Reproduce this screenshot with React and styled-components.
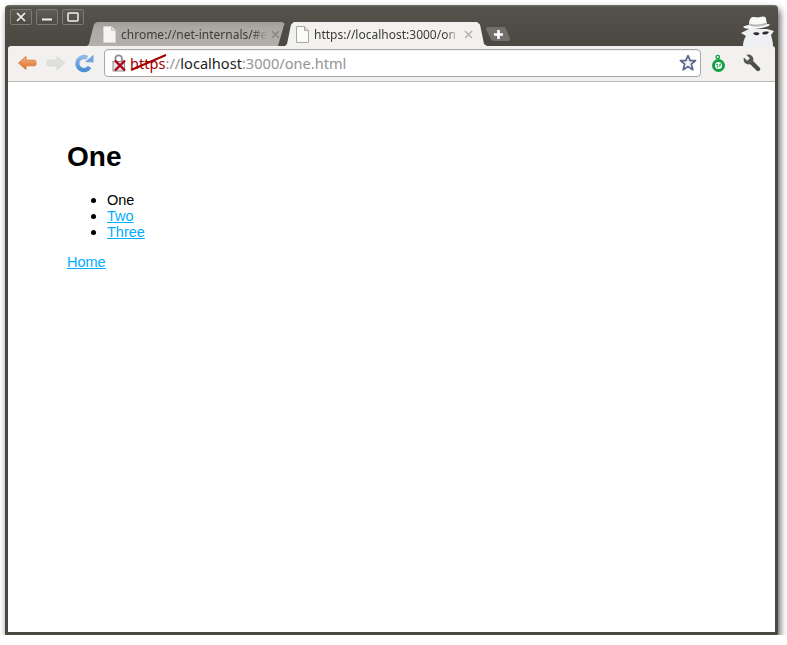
import React from 'react'
import styled, { createGlobalStyle } from 'styled-components'

const GlobalStyle = createGlobalStyle`
html, body {
  margin: 0;
  padding: 0;
  background: #fff;
}
`

const Window = styled.div`
  box-sizing: border-box;
  width: 773px;
  height: 630px;
  margin: 5px 0 0 5px;
  padding: 0 3px 3px 3px;
  display: flex;
  flex-direction: column;
  background: linear-gradient(#77746e 0, #55524c 2px, #4b4842 41px);
  border-radius: 4px 4px 1px 1px;
  box-shadow: 2px 4px 7px rgba(0, 0, 0, 0.65);
`

const TitleBar = styled.div`
  height: 41px;
  flex-shrink: 0;
  display: flex;
  padding-left: 2px;
`

const WindowControls = styled.div`
  display: flex;
  gap: 4px;
  padding-top: 4px;
  margin-right: 3px;
`

const ControlButton = styled.div`
  box-sizing: border-box;
  width: 22px;
  height: 16px;
  display: flex;
  align-items: center;
  justify-content: center;
  border: 1px solid #7d7a73;
  border-radius: 2px;
  background: linear-gradient(#5f5c56, #4e4b45);
`

const TabStrip = styled.div`
  display: flex;
  align-items: flex-end;
  flex: 1;
`

const Tab = styled.div`
  box-sizing: border-box;
  width: ${(p) => (p.$active ? 202 : 198)}px;
  height: 24px;
  padding: ${(p) => (p.$active ? '0 14px 0 10px' : '0 5px 0 15px')};
  display: flex;
  align-items: center;
  gap: 4px;
  font-family: 'Noto Sans', sans-serif;
  font-size: 12px;
  color: #3c3b37;
  background: ${(p) =>
    p.$active ? '#f2f1f0' : 'linear-gradient(#a09e98, #acaaa4 30%, #b2b0aa)'};
  clip-path: ${(p) =>
    p.$active
      ? 'polygon(0 100%, 2px 92%, 6px 10%, 9px 0, 192px 0, 195px 10%, 199px 92%, 100% 100%)'
      : 'polygon(0 100%, 2px 92%, 7px 8%, 10px 0, 195px 0, 198px 2px, 197px 12%, 191px 100%)'};
`

const TabTitle = styled.span`
  flex: 1;
  overflow: hidden;
  white-space: nowrap;
  mask-image: linear-gradient(to right, #000 90%, transparent 100%);
`

const NewTab = styled.div`
  width: 24px;
  height: 14px;
  margin: 0 0 5px -1px;
  display: flex;
  align-items: center;
  justify-content: center;
  background: #71706a;
  clip-path: path('M2 0H18Q19.500 0 20 2L24 11.500Q24 14 22 14H8Q6 14 5 12L0 2Q0 0 2 0Z');
`

const Incognito = styled.div`
  margin: auto 0 0 auto;
  height: 31px;
  line-height: 0;
`

const Toolbar = styled.div`
  box-sizing: border-box;
  height: 36px;
  flex-shrink: 0;
  display: flex;
  align-items: center;
  padding: 0 14px 1px 9px;
  background: #f2f1f0;
  border-bottom: 1px solid #b9b7b4;
  border-radius: 3px 3px 0 0;
`

const NavButton = styled.div`
  width: 20px;
  display: flex;
  justify-content: center;
  margin-right: 9px;
  line-height: 0;
`

const Omnibox = styled.div`
  box-sizing: border-box;
  width: 598px;
  height: 28px;
  display: flex;
  align-items: center;
  padding: 0 3px 0 7px;
  background: #fff;
  border: 1px solid #a9a8a5;
  border-radius: 4px;
  box-shadow: inset 0 1px 1px rgba(0, 0, 0, 0.06);
`

const UrlText = styled.div`
  position: relative;
  flex: 1;
  margin-left: 3px;
  font-family: 'Noto Sans', sans-serif;
  font-size: 14.6px;
  white-space: nowrap;
  color: #949494;
`

const Scheme = styled.span`
  color: #a30000;
`

const Host = styled.span`
  color: #222;
`

const Strike = styled.svg`
  position: absolute;
  left: 0;
  top: 0;
`

const ToolIcons = styled.div`
  display: flex;
  align-items: center;
  margin-left: 10px;
  gap: 17px;
  line-height: 0;
`

const Page = styled.div`
  flex: 1;
  padding: 59px 59px;
  background: #fff;
  color: #000;
  font-family: 'Liberation Sans', Arial, sans-serif;
  font-size: 14.5px;
  line-height: 16px;
`

const Heading = styled.h1`
  margin: 0 0 19px;
  font-size: 28px;
  line-height: 32px;
  font-weight: 700;
`

const List = styled.ul`
  margin: 0 0 14px;
  padding-left: 40px;

  li::marker {
    font-size: 15.500px;
  }
`

const Link = styled.a`
  color: #00aeff;
  text-decoration: underline;
`

const PageIcon = ({ active }) => (
  <svg width="15" height="17" viewBox="0 0 15 17">
    <path d="M1.500.5h8l4 4v12h-12z" fill={active ? '#fbfbfa' : '#f6f5f3'} stroke={active ? '#a9a8a5' : '#d6d4d0'} />
    <path d="M9.500.5v4h4" fill="#dedcd8" stroke={active ? '#a9a8a5' : '#c9c7c3'} />
  </svg>
)

const CloseGlyph = ({ active }) => (
  <svg width="9" height="9" viewBox="0 0 9 9">
    <path d="M1 1l7 7M8 1l-7 7" stroke={active ? '#b4b3b0' : '#8a8883'} strokeWidth="1.600" />
  </svg>
)

const BackIcon = () => (
  <svg width="20" height="16" viewBox="0 0 20 16">
    <defs>
      <linearGradient id="backFill" x1="0" y1="0" x2="0" y2="1">
        <stop offset="0" stopColor="#f6b47c" />
        <stop offset="1" stopColor="#dc6a2a" />
      </linearGradient>
    </defs>
    <path d="M9 1.500L1.500 8 9 14.500v-3.700h8.500c1.200 0 1.500-.8 1.500-2.800s-.3-2.800-1.500-2.800H9z" fill="url(#backFill)" stroke="#e2803f" strokeLinejoin="round" />
  </svg>
)

const ForwardIcon = () => (
  <svg width="20" height="16" viewBox="0 0 20 16">
    <path d="M11 1.500L18.500 8 11 14.500v-3.700H2.500C1.300 10.800 1 10 1 8s.3-2.800 1.500-2.800H11z" fill="#dfdfdd" stroke="#d8d8d6" strokeLinejoin="round" />
  </svg>
)

const ReloadIcon = () => (
  <svg width="19" height="19" viewBox="0 0 18 18">
    <defs>
      <linearGradient id="reloadStroke" x1="0" y1="0" x2="0" y2="1">
        <stop offset="0" stopColor="#8db9e6" />
        <stop offset="1" stopColor="#4a8ed6" />
      </linearGradient>
    </defs>
    <path d="M13.800 12.200A6.200 6.200 0 1 1 11.500 3.600" fill="none" stroke="url(#reloadStroke)" strokeWidth="4" />
    <path d="M9.500 7.600L17.500 8V.8z" fill="#6fa6de" />
  </svg>
)

const BrokenLock = () => (
  <svg width="15" height="18" viewBox="0 0 15 18">
    <path d="M3.500 7.500V4.500a3.200 3.200 0 0 1 6.400 0v3" fill="none" stroke="#8d8d8d" strokeWidth="1.800" />
    <rect x="1" y="7.500" width="11.500" height="9.500" fill="#e2e2e0" stroke="#8d8d8d" />
    <path d="M3 6.500l10 10M13 6.500l-10 10" stroke="#b0001c" strokeWidth="2.400" />
  </svg>
)

const StarIcon = () => (
  <svg width="18" height="18" viewBox="0 0 18 18">
    <path d="M9 1.600l2.200 5h5.400l-4.300 3.500 1.600 5.600L9 12.600l-4.900 3.100 1.600-5.600L1.400 6.600h5.400z" fill="#f0f3f8" stroke="#56678a" strokeWidth="1.700" strokeLinejoin="round" />
  </svg>
)

const ExtensionIcon = () => (
  <svg width="15" height="18" viewBox="0 0 15 18">
    <circle cx="7.500" cy="11.500" r="5" fill="#fff" stroke="#13a044" strokeWidth="3" />
    <circle cx="6.800" cy="3" r="1.700" fill="none" stroke="#13a044" strokeWidth="1.300" />
    <path d="M5.500 10l1.500 1.500M9.500 9.500l-1 3M6 13.500l1-1" stroke="#13a044" strokeWidth="1.300" />
  </svg>
)

const WrenchIcon = () => (
  <svg width="18" height="18" viewBox="0 0 18 18">
    <path d="M7 7L15 15" stroke="#4c4c49" strokeWidth="4.400" strokeLinecap="round" />
    <circle cx="5.500" cy="5.500" r="4.900" fill="#565653" />
    <path d="M-1 1.500L1.500-1 6.800 4.300 4.300 6.800z" fill="#f2f1f0" />
  </svg>
)

const SpyIcon = () => (
  <svg width="35" height="31" viewBox="0 0 35 31">
    <path d="M1 18l8-4h18l7 2-3 4c1 4 2 7 2 11H3c0-4 1-7 3-10z" fill="#eef0f3" />
    <path d="M9 10C9 6 10 2 13 2c3 0 5 1 7 0 3-1 6-1 6 2l1 5c1 0 3 0 3 1-4 3-14 4-20 4-3 0-6-1-7-2 1-1 4-2 6-2z" fill="#f9f9f9" />
    <path d="M9.500 8.500c5 1.600 12 1 17.300-1l.2 2c-5 2.300-12 2.800-17.500 1.200z" fill="#b9bab9" />
    <path d="M13 18c2-1 5-1 6.500.4-.8 2.300-5 2.500-6.500-.4zM29 17c-2-.8-5-.6-7 .9.800 2.200 5.500 2.300 7-.9z" fill="#2b2b2b" />
  </svg>
)

const App = () => (
  <>
    <GlobalStyle />
    <Window>
      <TitleBar>
        <WindowControls>
          <ControlButton>
            <svg width="10" height="10" viewBox="0 0 10 10">
              <path d="M1 1l8 8M9 1l-8 8" stroke="#f2f1f0" strokeWidth="1.700" />
            </svg>
          </ControlButton>
          <ControlButton>
            <svg width="10" height="10" viewBox="0 0 10 10">
              <path d="M0 7.500h10" stroke="#f2f1f0" strokeWidth="2" />
            </svg>
          </ControlButton>
          <ControlButton>
            <svg width="12" height="10" viewBox="0 0 12 10">
              <rect x="1" y="1" width="10" height="8" rx="1" fill="none" stroke="#f2f1f0" strokeWidth="1.500" />
            </svg>
          </ControlButton>
        </WindowControls>
        <TabStrip>
          <Tab>
            <PageIcon />
            <TabTitle>chrome://net-internals/#e</TabTitle>
            <CloseGlyph />
          </Tab>
          <Tab $active>
            <PageIcon active />
            <TabTitle>https://localhost:3000/on</TabTitle>
            <CloseGlyph active />
          </Tab>
          <NewTab>
            <svg width="11" height="11" viewBox="0 0 11 11">
              <path d="M5.500 1v9M1 5.500h9" stroke="#fff" strokeWidth="2.600" />
            </svg>
          </NewTab>
          <Incognito>
            <SpyIcon />
          </Incognito>
        </TabStrip>
      </TitleBar>
      <Toolbar>
        <NavButton><BackIcon /></NavButton>
        <NavButton><ForwardIcon /></NavButton>
        <NavButton><ReloadIcon /></NavButton>
        <Omnibox>
          <BrokenLock />
          <UrlText>
            <Scheme>https</Scheme>://<Host>localhost</Host>:3000/one.html
            <Strike width="38" height="20" viewBox="0 0 38 20">
              <path d="M1 17L36 2" stroke="#a30000" strokeWidth="2" />
            </Strike>
          </UrlText>
          <StarIcon />
        </Omnibox>
        <ToolIcons>
          <ExtensionIcon />
          <WrenchIcon />
        </ToolIcons>
      </Toolbar>
      <Page>
        <Heading>One</Heading>
        <List>
          <li>One</li>
          <li><Link href="#two">Two</Link></li>
          <li><Link href="#three">Three</Link></li>
        </List>
        <Link href="#home">Home</Link>
      </Page>
    </Window>
  </>
)

export default App
